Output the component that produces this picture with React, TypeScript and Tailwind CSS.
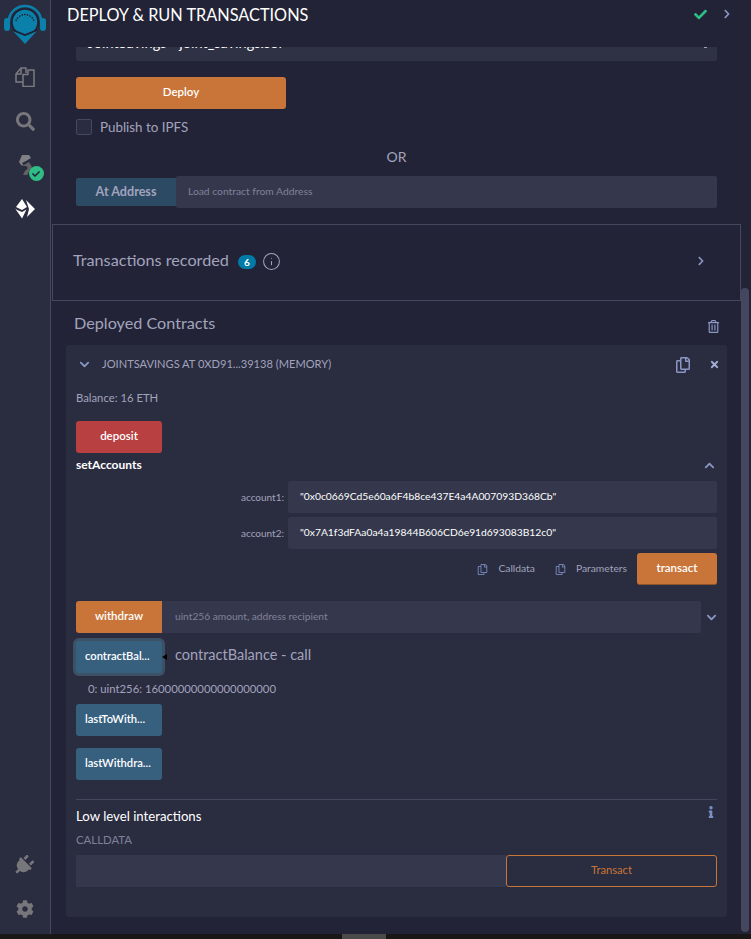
import React from 'react';
import {
  FaCheck, FaChevronDown, FaChevronRight, FaChevronUp, FaCog, FaInfo, FaPlug, FaRegCopy, FaRegTrashAlt, FaSearch, FaTimes,
} from 'react-icons/fa';
import { Info } from 'lucide-react';

const font = 'font-["Lato","Noto_Sans",sans-serif]';

const RemixLogo = () => (
  <svg width="42" height="42" viewBox="0 0 42 42" className="mt-[3px]">
    <path d="M5 18 C5 9 13 3 21 3 C29 3 37 9 37 18" fill="none" stroke="#0a80ab" strokeWidth="2.5" />
    <rect x="0" y="15" width="6" height="13" rx="3" fill="#0a80ab" />
    <rect x="36" y="15" width="6" height="13" rx="3" fill="#0a80ab" />
    <circle cx="21" cy="19" r="13" fill="#0a80ab" stroke="#1e2235" strokeWidth="1.5" />
    <path d="M12 18 A9.5 9.5 0 0 1 30 18" fill="none" stroke="#1e2235" strokeWidth="1.5" strokeDasharray="1.5 1.2" />
    <path d="M9 28 L21 33 L33 28 L21 41 Z" fill="#0a80ab" />
    <path d="M9 27 L21 32 L33 27" fill="none" stroke="#1e2235" strokeWidth="1.5" />
  </svg>
);

const FilesIcon = () => (
  <svg width="20" height="20" viewBox="0 0 20 20" fill="none" stroke="#7c7c80" strokeWidth="1.5" strokeLinejoin="round">
    <path d="M8 15H1V7L6 1H11V6" />
    <path d="M1 7H6V1" />
    <path d="M8 7.5 L13 7.5 L13 3 L19 3 L19 19.5 L8 19.5 Z" />
  </svg>
);

const SolidityIcon = () => (
  <svg width="13" height="20" viewBox="0 0 13 20">
    <path d="M3 0H10L12 3L7 6L3 8L5 11L2 10L0 7Z" fill="#808084" />
    <path d="M3 11L10 7L13 12L8 20H4L6 16L9 13L7 11Z" fill="#626266" />
  </svg>
);

const DeployIcon = () => (
  <svg width="20" height="20" viewBox="0 0 20 20" fill="#fff">
    <path d="M7 0L12 8L7 11L1 8Z" />
    <path d="M1 10.5L7 13L11.5 10.5L7 19.5Z" />
    <path d="M11 1L20 10L12 18L14 10Z" />
    <path d="M0 8.5L5 16L1.5 11.5Z" />
  </svg>
);

const SidebarIcon = ({ children, className }: { children: React.ReactNode; className: string }) => (
  <div className={`flex justify-center ${className}`}>{children}</div>
);

const Sidebar = () => (
  <div className="flex w-[51px] shrink-0 flex-col items-center border-r border-[#44475e] bg-[#2a2c3f]">
    <RemixLogo />
    <SidebarIcon className="mt-[22px]"><FilesIcon /></SidebarIcon>
    <SidebarIcon className="mt-[25px]"><FaSearch size={19} color="#77777b" /></SidebarIcon>
    <SidebarIcon className="relative mt-[24px]">
      <SolidityIcon />
      <div className="absolute left-[10px] top-[11px] flex h-[15px] w-[15px] items-center justify-center rounded-full bg-[#2ebd85]">
        <FaCheck size={8} color="#222336" />
      </div>
    </SidebarIcon>
    <SidebarIcon className="mt-[24px]"><DeployIcon /></SidebarIcon>
    <div className="flex-1" />
    <SidebarIcon className="mb-[24px] mr-[3px]"><FaPlug size={21} color="#77777b" className="rotate-45" /></SidebarIcon>
    <SidebarIcon className="mb-[16px]"><FaCog size={18} color="#77777b" /></SidebarIcon>
  </div>
);

const FnButton = ({ label, className }: { label: string; className: string }) => (
  <div className={`flex h-8 w-[86px] items-center rounded-[3px] bg-[#37607f] pb-[2px] pl-[9px] text-[11.2px] font-semibold text-white ${className}`}>{label}</div>
);

const Tool = ({ label, className }: { label: string; className: string }) => (
  <div className={`flex items-center ${className}`}>
    <FaRegCopy size={11} color="#6f7fb0" />
    <span className="ml-[10px] text-[10.3px] text-[#a2a3bd]">{label}</span>
  </div>
);

const Arg = ({ name, value, className }: { name: string; value: string; className: string }) => (
  <div className={`flex items-center ${className}`}>
    <span className="w-[212px] pr-1 text-right text-[10px] text-[#a2a3bd]">{name}:</span>
    <div className="flex h-8 flex-1 items-center rounded-[2px] bg-[#35384c] pl-3 text-[10.3px] text-white">{value}</div>
  </div>
);

const ContractCard = () => (
  <div className="ml-[15px] mr-[14px] rounded-[3px] bg-[#2a2c3f] pb-[30px] pl-[10px] pr-[10px]">
    <div className="flex h-[38px] items-center pt-[1px]">
      <FaChevronDown size={11} color="#8a96c4" className="ml-[3px]" />
      <span className="ml-3 text-[11.1px] text-[#a2a3bd]">JOINTSAVINGS AT 0XD91...39138 (MEMORY)</span>
      <div className="flex-1" />
      <FaRegCopy size={16} color="#8a96c4" />
      <FaTimes size={11} color="#a2acd4" className="ml-[18px] mr-[-3px]" />
    </div>
    <div className="mt-[7px] text-[11.3px] leading-4 text-[#a2a3bd]">Balance: 16 ETH</div>
    <div className="mt-[15px] flex h-8 w-[86px] items-center justify-center rounded-[3px] bg-[#b84040] pb-[2px] text-[11.5px] font-semibold text-white">deposit</div>
    <div className="mt-[4px] flex h-4 items-center justify-between pr-[2px] text-[12px] font-bold text-white">
      setAccounts
      <FaChevronUp size={11} color="#8a96c4" />
    </div>
    <Arg className="mt-2" name="account1" value={'"0x0c0669Cd5e60a6F4b8ce437E4a4A007093D368Cb"'} />
    <Arg className="mt-1" name="account2" value={'"0x7A1f3dFAa0a4a19844B606CD6e91d693083B12c0"'} />
    <div className="mt-1 flex items-center justify-end">
      <Tool label="Calldata" className="mr-5" />
      <Tool label="Parameters" className="mr-[10px]" />
      <div className="flex h-8 w-20 items-center justify-center rounded-[3px] border-b border-[#8f5429] bg-[#c97539] pb-[2px] text-[11.5px] font-semibold text-white">transact</div>
    </div>
    <div className="mr-[-16px] mt-4 flex items-center">
      <div className="flex h-8 w-[86px] items-center justify-center rounded-l-[3px] bg-[#c97539] pb-[2px] text-[11.5px] font-semibold text-white">withdraw</div>
      <div className="flex h-8 w-[539px] items-center rounded-r-[2px] bg-[#35384c] pl-[13px] text-[10.2px] text-[#808199]">uint256 amount, address recipient</div>
      <FaChevronDown size={11} color="#8a96c4" className="ml-[5px]" />
    </div>
    <div className="mt-2 flex items-center">
      <FnButton label="contractBal..." className="shadow-[0_0_0_3px_#3c5166]" />
      <div className="relative mb-[4px] ml-[13px] text-[14.5px] text-[#a2a3bd]">
        <span className="absolute left-[-13px] top-[10px] h-0 w-0 border-y-[3px] border-r-[5px] border-y-transparent border-r-black" />
        contractBalance - call
      </div>
    </div>
    <div className="ml-3 mt-2 text-[11.3px] leading-4 text-[#a2a3bd]">0: uint256: 16000000000000000000</div>
    <FnButton label="lastToWith..." className="mt-[7px]" />
    <FnButton label="lastWithdra..." className="mt-3" />
    <div className="mt-[19px] border-t border-[#44475e]" />
    <div className="flex h-[33px] items-center justify-between">
      <span className="text-[13.2px] text-white">Low level interactions</span>
      <FaInfo size={12} color="#7b8fc8" className="mb-[10px]" />
    </div>
    <div className="-mt-[1px] text-[11.4px] leading-4 text-[#80819a]">CALLDATA</div>
    <div className="mt-[7px] flex h-8">
      <div className="w-[430px] bg-[#35384c]" />
      <div className="flex flex-1 items-center justify-center rounded-[3px] border border-[#c97539] pb-[1px] text-[11.2px] text-[#c97539]">Transact</div>
    </div>
  </div>
);

const App = () => (
  <div className={`relative flex h-[939px] w-[751px] flex-col overflow-hidden bg-[#222336] ${font}`}>
    <div className="flex min-h-0 flex-1">
      <Sidebar />
      <div className="flex min-w-0 flex-1 flex-col pr-[10px]">
        <div className="flex h-[47px] shrink-0 items-start pl-4 pr-[9px] pt-[5px]">
          <span className="text-[16.3px] leading-5 text-white">DEPLOY &amp; RUN TRANSACTIONS</span>
          <div className="flex-1" />
          <FaCheck size={13} color="#2ebd85" className="mt-[3px]" />
          <FaChevronRight size={10} color="#8a96c4" className="ml-[15px] mt-[4px]" />
        </div>
        <div className="ml-[25px] mr-[24px] flex h-[14px] justify-between overflow-hidden rounded-b-[2px] bg-[#2f3145] pl-3 pr-[10px]">
          <div className="-mt-[12px] text-[14.5px] leading-4 text-white">JointSavings - joint_savings.sol</div>
          <div className="h-[1px] w-[3px] bg-[#a2a3bd]" />
        </div>
        <div className="ml-[25px] mt-4 flex h-8 w-[210px] items-center justify-center rounded-[3px] bg-[#c97539] pb-[2px] text-[11.5px] font-semibold text-white">Deploy</div>
        <div className="ml-[25px] mt-[8px] flex items-center">
          <div className="h-4 w-4 rounded-[2px] border border-[#44475e] bg-[#2a2c3f]" />
          <span className="ml-2 text-[13.4px] leading-5 text-[#a2a3bd]">Publish to IPFS</span>
        </div>
        <div className="ml-[25px] mr-[24px] mt-[10px] text-center text-[14px] leading-5 text-[#a2a3bd]">OR</div>
        <div className="ml-[25px] mr-[24px] mt-[9px] flex h-8 items-center">
          <div className="flex h-7 w-[100px] items-center justify-center rounded-l-[2px] bg-[#2c4a63] text-[12.6px] font-bold text-[#a2a3bd]">At Address</div>
          <div className="flex h-8 flex-1 items-center rounded-[2px] bg-[#35384c] pl-3 text-[10.3px] text-[#808199]">Load contract from Address</div>
        </div>
        <div className="ml-[1px] mr-0 mt-4 flex h-[77px] shrink-0 items-start border border-[#44475e] pl-5 pr-[34px] pt-[23px]">
          <span className="text-[16.2px] leading-6 text-[#a2a3bd]">Transactions recorded</span>
          <span className="ml-[9px] mt-[7px] flex h-[14px] w-[18px] items-center justify-center rounded-full bg-[#007aa6] text-[10px] font-bold text-white">6</span>
          <Info size={19} strokeWidth={1.3} color="#a2a3bd" className="ml-[6px] mt-[4px]" />
          <div className="flex-1" />
          <FaChevronRight size={10} color="#8a96c4" className="mt-[8px]" />
        </div>
        <div className="flex h-[44px] shrink-0 items-center justify-between pl-[23px] pr-[21px]">
          <span className="text-[16.2px] text-[#a2a3bd]">Deployed Contracts</span>
          <FaRegTrashAlt size={13} color="#8a96c4" className="mt-[6px]" />
        </div>
        <ContractCard />
      </div>
    </div>
    <div className="flex h-[5px] shrink-0 bg-[#1a1816]">
      <div className="ml-[342px] w-[44px] bg-[#4a4a4a]" />
    </div>
    <div className="absolute left-[741px] top-[288px] h-[644px] w-2 rounded-full bg-[#44475e]" />
  </div>
);

export default App;
